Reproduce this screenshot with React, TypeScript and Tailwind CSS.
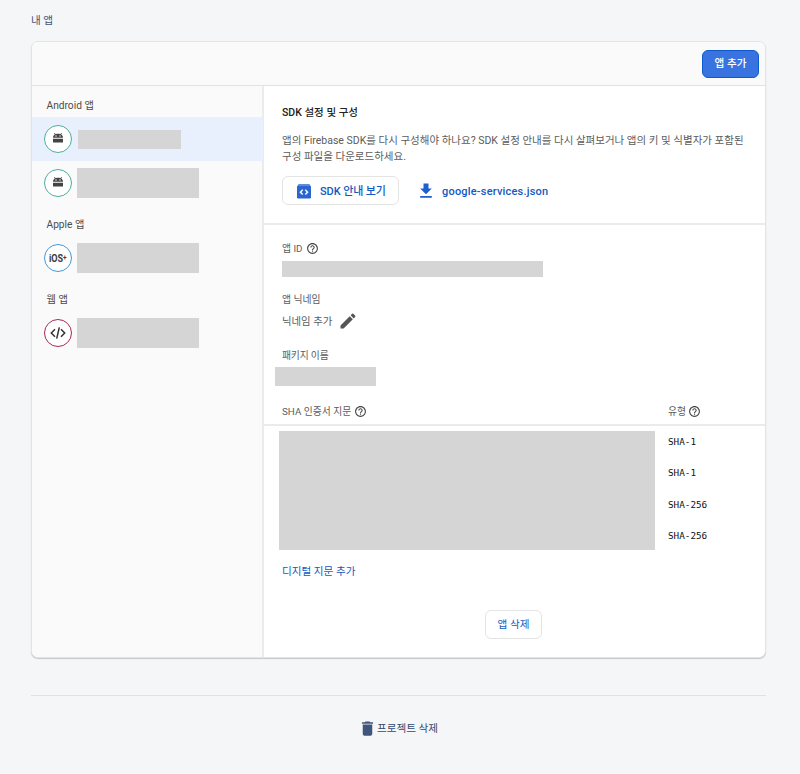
import React from 'react';
import { MdDelete, MdEdit, MdFileDownload, MdHelpOutline } from 'react-icons/md';

const AndroidIcon = () => (
    <svg className="mb-0.5" width="10" height="10" viewBox="0 0 10 10" fill="#444">
        <path d="M0 4.8C0.1 3.2 0.8 2.2 1.9 1.6L0.9 0.5L1.5 0L2.8 1.2C4.1 0.7 5.9 0.7 7.2 1.2L8.5 0L9.1 0.5L8.1 1.6C9.2 2.2 9.9 3.2 10 4.8Z" />
        <circle cx="3" cy="3" r="0.7" fill="#fff" />
        <circle cx="7" cy="3" r="0.7" fill="#fff" />
        <path d="M0 5.7H10V9.2C10 9.4 9.8 9.6 9.6 9.6H0.4C0.2 9.6 0 9.4 0 9.2Z" />
    </svg>
);

const IosIcon = () => (
    <span className="flex scale-x-[0.82] items-center font-[Roboto] font-bold leading-none text-[#3c3c3c]">
        <span className="text-[11px]">iOS</span>
        <span className="text-[8px]">+</span>
    </span>
);

const WebIcon = () => (
    <svg width="16" height="12" viewBox="0 0 16 12" fill="none" stroke="#333" strokeWidth="1.5">
        <path d="M5 2.3L1.3 6L5 9.7M11 2.3L14.7 6L11 9.7M9.3 0.3L6.7 11.7" />
    </svg>
);

const SdkIcon = () => (
    <svg className="mt-px" width="14" height="15" viewBox="0 0 14 15">
        <path d="M1.5 0.3H12.5L13.3 1.6H0.7Z" fill="#2a65d0" />
        <rect y="1.6" width="14" height="13" rx="1.3" fill="#2a65d0" />
        <path d="M5.7 5.8L3.4 8.2L5.7 10.6M8.3 5.8L10.6 8.2L8.3 10.6" fill="none" stroke="#fff" strokeWidth="1.4" />
    </svg>
);

type AppRowProps = {
    icon: React.ReactNode;
    ring: string;
    bar: string;
    selected?: boolean;
};

const AppRow: React.FC<AppRowProps> = ({ icon, ring, bar, selected }) => (
    <div className={`flex h-11 items-center pl-3 ${selected ? '-mr-px bg-[#e8f0fe]' : ''}`}>
        <div className={`flex size-[28px] shrink-0 items-center justify-center rounded-full border-[1.3px] bg-white ${ring}`}>
            {icon}
        </div>
        <div className={`bg-[#d5d5d5] ${bar}`}></div>
    </div>
);

const GroupLabel: React.FC<{ children: React.ReactNode }> = ({ children }) => (
    <div className="h-[31px] pl-[14.5px] pt-[12px] text-[10.2px] leading-4 text-[#4c4c4c]">{children}</div>
);

const HelpIcon = () => <MdHelpOutline className="mb-px text-[#444]" size={13} />;

const types = ['SHA-1', 'SHA-1', 'SHA-256', 'SHA-256'];

export default function App() {
    return (
        <div className="h-[774px] w-[800px] bg-[#f5f6f8] pl-[31px] pt-3 font-[Roboto,'Noto_Sans_CJK_KR',sans-serif] text-[10.6px] text-[#5c5c5c]">
            <h2 className="h-[29px] leading-[17px] text-[#425478]">내 앱</h2>

            <div className="h-[617px] w-[735px] overflow-hidden rounded-[7px] border border-[#e2e4e6] bg-white shadow-[0_1px_1px_#c4c7ca]">
                <div className="flex h-[44px] items-center justify-end border-b border-[#e2e2e2] bg-[#fafafa] pr-1.5">
                    <button className="h-[28px] w-[57px] rounded-[6px] border border-[#0c5cd0] bg-[#3973e0] pt-px font-medium text-white">
                        앱 추가
                    </button>
                </div>

                <div className="flex h-[571px]">
                    <div className="w-[232px] shrink-0 border-r-2 border-[#ebebeb] bg-[#fafafa]">
                        <GroupLabel>Android 앱</GroupLabel>
                        <AppRow icon={<AndroidIcon />} ring="border-[#4caf98]" bar="ml-[6px] h-[19px] w-[103px]" selected />
                        <AppRow icon={<AndroidIcon />} ring="border-[#4caf98]" bar="ml-[5px] h-[30px] w-[122px]" />
                        <GroupLabel>Apple 앱</GroupLabel>
                        <AppRow icon={<IosIcon />} ring="border-[#4499dd]" bar="ml-[5px] h-[30px] w-[122px]" />
                        <GroupLabel>웹 앱</GroupLabel>
                        <AppRow icon={<WebIcon />} ring="border-[#a82a50]" bar="ml-[5px] h-[30px] w-[122px]" />
                    </div>

                    <div className="flex-1">
                        <div className="h-[139px] border-b-2 border-[#ebebeb] pl-[18px] pt-[19px]">
                            <h3 className="text-[10.5px] font-medium leading-4 text-[#212121]">SDK 설정 및 구성</h3>
                            <p className="mt-3 whitespace-nowrap text-[10.5px] leading-[16px]">
                                앱의 Firebase SDK를 다시 구성해야 하나요? SDK 설정 안내를 다시 살펴보거나 앱의 키 및 식별자가 포함된
                                <br />
                                구성 파일을 다운로드하세요.
                            </p>
                            <div className="mt-[11px] flex items-center text-[11px] font-medium text-[#1558c0]">
                                <button className="flex h-[29px] w-[117px] items-center rounded-[6px] border border-[#e4e4e4] pl-3.5">
                                    <SdkIcon />
                                    <span className="ml-[9px] pt-[3px] tracking-[-0.1px]">SDK 안내 보기</span>
                                </button>
                                <MdFileDownload className="ml-[17px] text-[#1c60d0]" size={20} />
                                <span className="ml-1.5 pt-[3px] tracking-[0.2px]">google-services.json</span>
                            </div>
                        </div>

                        <div className="h-[201px] border-b-2 border-[#ebebeb] pl-[18px] pt-4 text-[9.8px] leading-4">
                            <div className="flex items-center gap-[3px]">앱 ID <HelpIcon /></div>
                            <div className="mt-1 h-4 w-[261px] bg-[#d5d5d5]"></div>
                            <div className="mt-[15px]">앱 닉네임</div>
                            <div className="mt-[3px] flex items-center gap-1.5 text-[10.4px]">
                                <span className="pt-px">닉네임 추가</span> <MdEdit className="text-[#555]" size={20} />
                            </div>
                            <div className="mt-[17px] tracking-[-0.15px]">패키지 이름</div>
                            <div className="-ml-[7px] mt-[3px] h-[19px] w-[101px] bg-[#d5d5d5]"></div>
                            <div className="mt-[18px] flex items-center">
                                <div className="flex w-[386px] items-center gap-[3px]">SHA 인증서 지문 <HelpIcon /></div>
                                <div className="flex items-center gap-0.5">유형 <HelpIcon /></div>
                            </div>
                        </div>

                        <div className="flex h-[138px] pl-[15px] pt-[5px]">
                            <div className="h-[119px] w-[376px] bg-[#d5d5d5]"></div>
                            <div className="ml-[13px] font-['DejaVu_Sans_Mono',monospace] text-[9.3px] text-[#111]">
                                {types.map((type, i) => (
                                    <div key={i} className="mb-[9.3px] h-[22px] leading-[22px]">{type}</div>
                                ))}
                            </div>
                        </div>

                        <div className="pl-[18px] leading-4 text-[#1558c0]">디지털 지문 추가</div>
                        <div className="mt-[30px] flex justify-center pr-[2px]">
                            <button className="h-[29px] w-[57px] rounded-[6px] border border-[#e4e4e4] pt-px text-[#1558c0]">앱 삭제</button>
                        </div>
                    </div>
                </div>
            </div>

            <div className="mt-[37px] flex w-[735px] justify-center border-t border-[#dfe1e4] pt-[23px] text-[#33486f]">
                <div className="flex items-center pr-px">
                    <MdDelete className="text-[#3f5579]" size={19} />
                    <span className="pt-px">프로젝트 삭제</span>
                </div>
            </div>
        </div>
    );
}
